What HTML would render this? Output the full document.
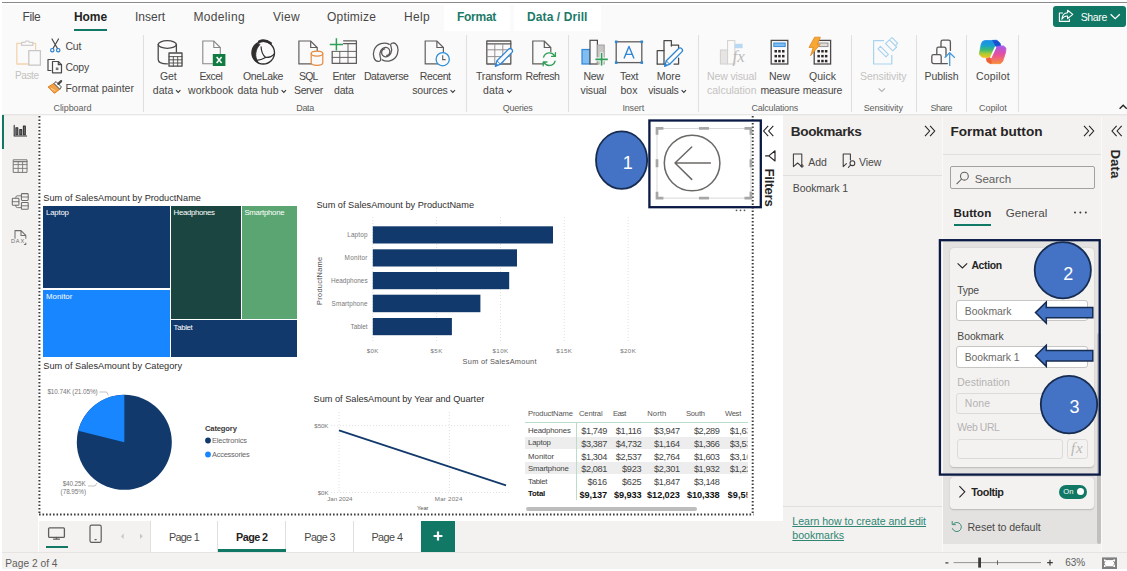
<!DOCTYPE html>
<html lang="en"><head><meta charset="utf-8"><title>Power BI Desktop - Bookmark button</title>
<style>
html,body{margin:0;padding:0;background:#fff;}
body{width:1127px;height:571px;position:relative;overflow:hidden;font-family:"Liberation Sans",sans-serif;}
.b{position:absolute;}
.t{position:absolute;white-space:pre;}
.u{text-decoration:underline;}
svg.ov{position:absolute;left:0;top:0;}
</style></head><body>
<div id="bg">
<div class="b" style="left:2.0px;top:2.0px;width:1125.0px;height:1.4px;background:#8a8a8a;"></div>
<div class="b" style="left:2.0px;top:5.0px;width:1125.0px;height:108.5px;background:#fafafa;"></div>
<div class="b" style="left:2.0px;top:113.6px;width:1125.0px;height:2.8px;background:linear-gradient(#dedede,#f2f2f2 55%,#fdfdfd);"></div>
<div class="b" style="left:444.0px;top:5.0px;width:65.5px;height:25.5px;background:#fff;"></div>
<div class="b" style="left:514.0px;top:5.0px;width:87.0px;height:25.5px;background:#fff;"></div>
<div class="b" style="left:74.0px;top:28.6px;width:33.0px;height:2.0px;background:#117865;"></div>
<div class="b" style="left:1053.2px;top:6.0px;width:73.0px;height:21.2px;background:#117865;border-radius:3px;"></div>
<div class="b" style="left:142.5px;top:35.0px;width:1.0px;height:77.0px;background:#e1dfdd;"></div>
<div class="b" style="left:466.3px;top:35.0px;width:1.0px;height:77.0px;background:#e1dfdd;"></div>
<div class="b" style="left:567.8px;top:35.0px;width:1.0px;height:77.0px;background:#e1dfdd;"></div>
<div class="b" style="left:697.7px;top:35.0px;width:1.0px;height:77.0px;background:#e1dfdd;"></div>
<div class="b" style="left:850.5px;top:35.0px;width:1.0px;height:77.0px;background:#e1dfdd;"></div>
<div class="b" style="left:915.5px;top:35.0px;width:1.0px;height:77.0px;background:#e1dfdd;"></div>
<div class="b" style="left:966.4px;top:35.0px;width:1.0px;height:77.0px;background:#e1dfdd;"></div>
<div class="b" style="left:1018.3px;top:35.0px;width:1.0px;height:77.0px;background:#e1dfdd;"></div>
<div class="b" style="left:2.0px;top:114.4px;width:36.3px;height:437.6px;background:#f3f2f1;background:linear-gradient(#e4e3e2,#f3f2f1 2.5px);"></div>
<div class="b" style="left:2.0px;top:114.8px;width:2.3px;height:34.5px;background:#117865;"></div>
<div class="b" style="left:38.5px;top:520.6px;width:744.5px;height:31.4px;background:#f3f2f1;"></div>
<div class="b" style="left:2.0px;top:552.0px;width:1125.0px;height:17.2px;background:#f3f2f1;"></div>
<div class="b" style="left:2.0px;top:552.0px;width:1125.0px;height:0.8px;background:#e6e4e2;"></div>
<div class="b" style="left:150.8px;top:520.6px;width:269.8px;height:31.2px;background:#fff;"></div>
<div class="b" style="left:150.4px;top:520.6px;width:1.0px;height:31.2px;background:#e1dfdd;"></div>
<div class="b" style="left:217.2px;top:520.6px;width:1.0px;height:31.2px;background:#e1dfdd;"></div>
<div class="b" style="left:285.3px;top:520.6px;width:1.0px;height:31.2px;background:#e1dfdd;"></div>
<div class="b" style="left:352.9px;top:520.6px;width:1.0px;height:31.2px;background:#e1dfdd;"></div>
<div class="b" style="left:217.9px;top:548.6px;width:67.8px;height:3.2px;background:#117865;"></div>
<div class="b" style="left:420.6px;top:520.6px;width:34.6px;height:31.2px;background:#117865;"></div>
<div class="b" style="left:46.4px;top:545.6px;width:21.3px;height:2.4px;background:#117865;"></div>
<div class="b" style="left:783.0px;top:114.4px;width:344.0px;height:437.6px;background:#f3f2f1;background:linear-gradient(#e4e3e2,#f3f2f1 2.5px);"></div>
<div class="b" style="left:942.0px;top:116.0px;width:1.0px;height:436.0px;background:#faf9f8;"></div>
<div class="b" style="left:1101.4px;top:116.0px;width:1.0px;height:436.0px;background:#faf9f8;"></div>
<div class="b" style="left:783.0px;top:174.5px;width:159.0px;height:1.0px;background:#e1dfdd;"></div>
<div class="b" style="left:783.0px;top:506.3px;width:159.0px;height:1.0px;background:#e1dfdd;"></div>
<div class="b" style="left:943.0px;top:154.2px;width:158.4px;height:1.0px;background:#e1dfdd;"></div>
<div class="b" style="left:950.0px;top:166.2px;width:144.6px;height:23.0px;border:1px solid #a3a19f;box-sizing:border-box;border-radius:2px;"></div>
<div class="b" style="left:953.5px;top:223.5px;width:37.9px;height:2.2px;background:#117865;"></div>
<div class="b" style="left:943.0px;top:241.0px;width:158.2px;height:303.3px;background:#e4e2e0;"></div>
<div class="b" style="left:1096.8px;top:333.0px;width:3.8px;height:211.3px;background:#c2c0be;border-radius:2px;"></div>
<div class="b" style="left:949.8px;top:247.9px;width:144.6px;height:219.1px;background:#f3f2f1;border-radius:4px;box-shadow:0 0.5px 1.5px rgba(0,0,0,.18);"></div>
<div class="b" style="left:949.8px;top:477.0px;width:144.6px;height:32.0px;background:#f3f2f1;border-radius:4px;box-shadow:0 0.5px 1.5px rgba(0,0,0,.18);"></div>
<div class="b" style="left:956.3px;top:300.4px;width:131.4px;height:21.1px;background:#fff;border:1px solid #c8c6c4;box-sizing:border-box;border-radius:3px;"></div>
<div class="b" style="left:956.3px;top:346.4px;width:131.4px;height:21.4px;background:#fff;border:1px solid #c8c6c4;box-sizing:border-box;border-radius:3px;"></div>
<div class="b" style="left:956.3px;top:393.0px;width:131.4px;height:20.5px;border:1px solid #dddbd9;box-sizing:border-box;border-radius:3px;"></div>
<div class="b" style="left:956.5px;top:438.6px;width:106.2px;height:20.5px;border:1px solid #dddbd9;box-sizing:border-box;border-radius:3px;"></div>
<div class="b" style="left:1066.5px;top:438.6px;width:21.1px;height:20.5px;border:1px solid #dddbd9;box-sizing:border-box;border-radius:3px;"></div>
<div class="b" style="left:1058.9px;top:484.8px;width:28.6px;height:13.8px;background:#117865;border-radius:7px;"></div>
<div class="b" style="left:1076.6px;top:488.2px;width:7.0px;height:7.0px;background:#fff;border-radius:4px;"></div>
<div class="b" style="left:43.3px;top:205.7px;width:126.7px;height:82.6px;background:#12396b;"></div>
<div class="b" style="left:43.3px;top:289.7px;width:126.7px;height:67.0px;background:#1886ff;"></div>
<div class="b" style="left:171.3px;top:205.7px;width:69.7px;height:113.3px;background:#1b4540;"></div>
<div class="b" style="left:242.3px;top:205.7px;width:54.7px;height:113.3px;background:#5aa571;"></div>
<div class="b" style="left:171.3px;top:320.3px;width:125.7px;height:36.4px;background:#12396b;"></div>
<div class="b" style="left:525.3px;top:436.6px;width:222.6px;height:12.4px;background:#ededed;"></div>
<div class="b" style="left:525.3px;top:462.2px;width:222.6px;height:12.3px;background:#ededed;"></div>
<div class="b" style="left:525.3px;top:422.2px;width:222.6px;height:0.9px;background:#b9dccb;"></div>
<div class="b" style="left:576.0px;top:422.6px;width:1.0px;height:77.4px;background:#b9dccb;"></div>
<div class="b" style="left:526.0px;top:507.1px;width:171.2px;height:3.7px;background:#bdbdbd;border-radius:2px;"></div>
</div>
<svg class="ov" width="1127" height="571" viewBox="0 0 1127 571" fill="none">
<g stroke="#3c3c3c" stroke-width="2" stroke-dasharray="1.6 1.9"><line x1="39.4" y1="116" x2="39.4" y2="515"/><line x1="752.7" y1="116" x2="752.7" y2="515"/><line x1="39" y1="514.6" x2="753.5" y2="514.6"/></g>
<g stroke="#d8d8d8" stroke-width="0.8" stroke-dasharray="1 2"><line x1="372.8" y1="217" x2="372.8" y2="342"/><line x1="436.6" y1="217" x2="436.6" y2="342"/><line x1="500.5" y1="217" x2="500.5" y2="342"/><line x1="564.3" y1="217" x2="564.3" y2="342"/><line x1="628.2" y1="217" x2="628.2" y2="342"/></g>
<rect x="372.8" y="226.3" width="180.2" height="17.2" fill="#12396b"/>
<rect x="372.8" y="249.3" width="144.2" height="17.2" fill="#12396b"/>
<rect x="372.8" y="272" width="136.4" height="17.2" fill="#12396b"/>
<rect x="372.8" y="294.7" width="107.6" height="17.5" fill="#12396b"/>
<rect x="372.8" y="318" width="79.1" height="17.2" fill="#12396b"/>
<g stroke="#d8d8d8" stroke-width="0.8" stroke-dasharray="1 2"><line x1="339" y1="412" x2="339" y2="493"/><line x1="449.4" y1="412" x2="449.4" y2="493"/><line x1="331" y1="425.6" x2="510" y2="425.6"/><line x1="331" y1="492.5" x2="510" y2="492.5"/></g>
<line x1="339" y1="430.4" x2="506" y2="485.4" stroke="#12396b" stroke-width="1.7"/>
<circle cx="124.3" cy="442.3" r="47.5" fill="#12396b"/>
<path d="M124.3 442.3 L124.3 394.8 A47.5 47.5 0 0 0 78.26 430.63 Z" fill="#1886ff"/>
<g stroke="#a6a6a6" stroke-width="0.7"><path d="M99.5 392 H106.6 L108.4 395.3"/><path d="M88 486 H95 L97 483"/></g>
<circle cx="208" cy="440.5" r="2.9" fill="#12396b"/><circle cx="208" cy="454.5" r="2.9" fill="#1886ff"/>
<rect x="649.4" y="120.5" width="111.4" height="86.7" stroke="#0a1a45" stroke-width="2.3"/>
<rect x="939.9" y="240.2" width="159.8" height="234.4" stroke="#0a1a45" stroke-width="2.3"/>
<ellipse cx="621.6" cy="160.1" rx="25.6" ry="28.8" fill="#4472c4" stroke="#172c51" stroke-width="1.8"/>
<ellipse cx="1062.8" cy="270.3" rx="28.1" ry="28.1" fill="#4472c4" stroke="#172c51" stroke-width="1.8"/>
<ellipse cx="1069" cy="404.6" rx="28.2" ry="28.8" fill="#4472c4" stroke="#172c51" stroke-width="1.8"/>
<path d="M1035.5 312.6 L1046.3 302.0 V307.40000000000003 H1092.8 V317.8 H1046.3 V323.20000000000005 Z" fill="#4472c4" stroke="#172c51" stroke-width="1.5" stroke-linejoin="miter"/>
<path d="M1035.5 355.8 L1046.3 345.2 V350.6 H1092.8 V361.0 H1046.3 V366.40000000000003 Z" fill="#4472c4" stroke="#172c51" stroke-width="1.5" stroke-linejoin="miter"/>
<rect x="657" y="128.4" width="93.9" height="69.7" stroke="#c8c8c8" stroke-width="0.7"/>
<g stroke="#a6a6a6" stroke-width="2.7"><path d="M657 134.8 V128.4 H663.4"/><path d="M744.5 128.4 H750.9 V134.8"/><path d="M657 191.7 V198.1 H663.4"/><path d="M744.5 198.1 H750.9 V191.7"/><path d="M698.95 128.4 H708.95"/><path d="M698.95 198.1 H708.95"/><path d="M657 159.25 V167.25"/><path d="M750.9 159.25 V167.25"/></g>
<g stroke="#6b6966" stroke-width="1.5" stroke-linecap="round" stroke-linejoin="round"><circle cx="692.1" cy="163" r="27.8"/><path d="M710.4 163 H675 M691.7 147 L675 163 L691.7 179.4"/></g>
<g fill="#555"><circle cx="736.5" cy="210.3" r="0.9"/><circle cx="740.5" cy="210.3" r="0.9"/><circle cx="744.5" cy="210.3" r="0.9"/></g>
<g stroke="#4a4947" stroke-width="1.3" stroke-linejoin="round" stroke-linecap="round" ><path d="M23.4 43.4 H16.8 V64 H28" stroke="#f5d3ad"/><path d="M32.6 43.4 H35.6 V49.6" stroke="#f5d3ad"/><path d="M21.6 45.4 V42.4 H24.8 A2.6 2.6 0 0 1 29.6 42.4 H32.8 V45.4 Z" stroke="#d0cecc" fill="#fafafa"/><rect x="28.8" y="50.6" width="11.6" height="14.6" stroke="#c8c6c4" fill="#fafafa"/></g>
<g stroke="#4a4947" stroke-width="1.2" stroke-linejoin="round" stroke-linecap="round" ><path d="M52 39 L57.5 48.5 M58.5 39 L53 48.5"/><circle cx="52.3" cy="50.2" r="1.7" stroke="#2f7fd0"/><circle cx="58.2" cy="50.2" r="1.7" stroke="#2f7fd0"/></g>
<g stroke="#4a4947" stroke-width="1.2" stroke-linejoin="round" stroke-linecap="round" ><path d="M51 70.5 H48 V59.5 H54.5 "/><path d="M52.5 61.5 H58.3 L61.5 64.7 V72.8 H52.5 Z" fill="none" stroke="#4a4947" stroke-width="1.2"/><path d="M58.3 61.5 V64.7 H61.5" stroke="#4a4947" stroke-width="1.2"/><rect x="55.8" y="67.5" width="2.6" height="2.6" fill="#777" stroke="none"/></g>
<polygon points="48.08,86.91 53.97,83.44 59.75,89.22 54.44,93.37" fill="#f2a048" stroke="#e0801e" stroke-width="1" stroke-linejoin="round"/><polygon points="53.97,83.44 56.05,81.59 61.37,86.91 59.75,89.22" fill="#fafafa" stroke="#4a4947" stroke-width="1" stroke-linejoin="round"/><polyline points="58.36,83.90 61.14,81.13" stroke="#4a4947" stroke-width="2.2" stroke-linecap="round"/><polyline points="50.97,88.29 55.36,90.83" stroke="#fbd9a8" stroke-width="1"/>
<g stroke="#4a4947" stroke-width="1.3" stroke-linejoin="round" stroke-linecap="round" ><path d="M158.2 44.5 V59.5 C158.2 62.5 163 63.8 167.4 63.8"/><path d="M176.4 44.5 V52"/><ellipse cx="167.3" cy="44.5" rx="9.1" ry="3.8"/><rect x="169" y="53" width="13" height="13.2" fill="#fafafa"/><path d="M169 56.6 H182 M169 59.8 H182 M169 63 H182 M173.3 56.6 V66.2 M177.7 56.6 V66.2" stroke-width="0.9"/></g>
<path d="M202.8 41 H213.8 L220.3 47.5 V63.8 H202.8 Z" fill="none" stroke="#8a8886" stroke-width="1.1"/><path d="M213.8 41 V47.5 H220.3" stroke="#8a8886" stroke-width="1.1"/>
<rect x="212.8" y="54" width="12.6" height="12" fill="#107c41"/><path d="M216.6 57 L221.6 63 M221.6 57 L216.6 63" stroke="#fff" stroke-width="1.5"/>
<g stroke="#2f2e2d" stroke-linecap="round" stroke-linejoin="round"><circle cx="263.2" cy="52.7" r="11.3" stroke-width="1.3"/><path d="M259.20 41.72 Q264.53 38.79 270.65 43.32" stroke-width="2.6"/><path d="M257.60 43.58 C250.15 48.64 250.82 59.29 258.14 62.48 C254.14 56.63 255.21 49.31 259.73 44.65 Z" fill="#2f2e2d" stroke-width="1"/><path d="M261.07 46.78 C261.33 51.97 262.93 55.30 265.59 57.43 C268.79 57.69 272.11 56.36 274.38 53.97" stroke-width="1.2"/><path d="M256.54 60.35 C259.47 60.09 262.80 59.02 265.59 57.43" stroke-width="1.2"/></g>
<path d="M298.9 41 H310.7 L317.2 47.5 V63.8 H298.9 Z" fill="none" stroke="#605e5c" stroke-width="1.2"/><path d="M310.7 41 V47.5 H317.2" stroke="#605e5c" stroke-width="1.2"/>
<path d="M311.2 53.6 V62.8 C311.2 66.2 322.8 66.2 322.8 62.8 V53.6" fill="#fafafa" stroke="#e68a3e" stroke-width="1.2"/><ellipse cx="317" cy="53.6" rx="5.8" ry="2.5" fill="#fafafa" stroke="#e68a3e" stroke-width="1.2"/>
<g stroke="#605e5c" stroke-width="1.25" stroke-linejoin="round" stroke-linecap="round" ><path d="M343.6 40.8 H356.4 V63.4 H332.2 V51.6"/><path d="M343.6 43.6 H356.4" stroke-width="1.4"/><path d="M332.2 51.4 H356.4 M332.2 57.4 H356.4 M339.8 51.6 V63.4 M348 43.6 V63.4" stroke-width="0.95"/></g>
<path d="M336.4 38.2 V50.6 M329.8 44.4 H343" stroke="#2f9e56" stroke-width="1.5"/>
<g stroke="#5a5856" stroke-width="1.25" stroke-linecap="round" stroke-linejoin="round"><path d="M389.25 44.40 C384.49 41.60 376.64 43.28 374.12 50.01 C372.16 55.61 374.40 61.21 378.04 61.49 C380.57 61.49 381.41 59.53 380.29 57.29 C378.61 53.37 381.13 48.04 385.33 47.48 C388.41 47.20 390.09 49.73 389.81 52.25 C389.53 54.49 388.13 55.33 386.73 55.33"/><path d="M382.19 59.87 C386.95 62.67 394.80 60.99 397.32 54.26 C399.28 48.66 397.04 43.06 393.39 42.78 C390.87 42.78 390.03 44.74 391.15 46.98 C392.83 50.90 390.31 56.22 386.11 56.78 C383.03 57.06 381.35 54.54 381.63 52.02 C381.91 49.78 383.31 48.94 384.71 48.94"/></g>
<path d="M425.2 41 H436.9 L443.4 47.5 V63.8 H425.2 Z" fill="none" stroke="#605e5c" stroke-width="1.2"/><path d="M436.9 41 V47.5 H443.4" stroke="#605e5c" stroke-width="1.2"/>
<circle cx="442.7" cy="59.2" r="6.6" fill="#fafafa" stroke="#2f8fd8" stroke-width="1.3"/><path d="M442.7 55.2 V59.6 H445.6" stroke="#605e5c" stroke-width="1.1"/>
<g stroke="#5a5856" stroke-width="1.3" stroke-linejoin="round" stroke-linecap="round" ><rect x="486.8" y="41" width="24" height="23"/><path d="M486.8 43.8 H510.8" stroke-width="1.3"/><path d="M486.8 49.8 H510.8 M486.8 56.6 H510.8 M494.8 44 V64 M502.8 44 V64" stroke-width="0.9" stroke="#8a8886"/></g>
<path d="M495.3 66.3 L497 60.8 L508.4 49.4 A2.2 2.2 0 0 1 511.8 52.6 L500.4 64.2 Z" fill="#fafafa" stroke="#2f86d6" stroke-width="1.3" stroke-linejoin="round"/><path d="M497 60.8 L500.4 64.2" stroke="#2f86d6" stroke-width="1"/><path d="M495.3 66.3 L496.3 63.2 L498.2 65.3 Z" fill="#2f86d6"/>
<path d="M532.8 41 H544.3 L550.8 47.5 V63.8 H532.8 Z" fill="none" stroke="#605e5c" stroke-width="1.2"/><path d="M544.3 41 V47.5 H550.8" stroke="#605e5c" stroke-width="1.2"/>
<circle cx="549.3" cy="59.2" r="7.4" fill="#fafafa"/><g stroke="#2f9e56" stroke-width="1.3" stroke-linecap="round" stroke-linejoin="round"><path d="M543.6 57.2 A6 6 0 0 1 554.6 56 M555.4 52.6 V56.4 H551.6"/><path d="M555 61.2 A6 6 0 0 1 544 62.4 M543.2 65.8 V62 H547"/></g>
<rect x="582" y="49.5" width="8" height="14.5" fill="#7fbdf2" stroke="#2f86d6" stroke-width="1.2"/><rect x="590" y="40.3" width="7.4" height="23.7" fill="#fafafa" stroke="#4a4947" stroke-width="1.2"/><rect x="597.4" y="45" width="6.8" height="19" fill="#c8c6c4" stroke="#a19f9d" stroke-width="1"/><path d="M601.6 52.5 V66 M595 59.4 H608" stroke="#fafafa" stroke-width="3.6"/><path d="M601.6 53 V65.6 M595.4 59.4 H607.8" stroke="#2f9e56" stroke-width="1.6"/>
<rect x="616.2" y="41.8" width="25.6" height="20.8" stroke="#605e5c" stroke-width="1.3"/><g fill="#2f86d6"><rect x="614.9" y="40.5" width="2.6" height="2.6"/><rect x="640.5" y="40.5" width="2.6" height="2.6"/><rect x="614.9" y="61.3" width="2.6" height="2.6"/><rect x="640.5" y="61.3" width="2.6" height="2.6"/></g><path d="M624 58.5 L629 46.5 L634 58.5 M625.8 54.4 H632.2" stroke="#2f86d6" stroke-width="1.4" stroke-linejoin="round"/>
<g stroke="#4a4947" stroke-width="1.25" stroke-linejoin="round" stroke-linecap="round" ><path d="M657.2 64 V50.5 H664"/><path d="M664 64 V40.6 H671.4 V46"/><path d="M671.4 45.2 H678.6 V50"/><path d="M657.2 64 H668 M678.6 58 V64 H674"/></g>
<path d="M664.6 66.3 L666.3 60.8 L678.4 48.7 A2.2 2.2 0 0 1 681.8 51.9 L669.7 64.2 Z" fill="#fafafa" stroke="#2f86d6" stroke-width="1.3" stroke-linejoin="round"/><path d="M666.3 60.8 L669.7 64.2" stroke="#2f86d6" stroke-width="1"/><path d="M664.6 66.3 L665.6 63.2 L667.5 65.3 Z" fill="#2f86d6"/>
<rect x="720.4" y="50" width="7.2" height="14" fill="#e6e5e4" stroke="#d2d0ce" stroke-width="1"/><rect x="727.6" y="40.6" width="7.2" height="23.4" fill="#fafafa" stroke="#d2d0ce" stroke-width="1"/><rect x="734.8" y="43.8" width="7.8" height="4.4" fill="#b9d9f3" stroke="none"/>
<rect x="771.2" y="40.4" width="16.59999999999991" height="23.6" fill="#fafafa" stroke="#4a4947" stroke-width="1.3"/><rect x="773.8000000000001" y="43.0" width="11.39999999999991" height="3.6" fill="#7fbdf2" stroke="#2f86d6" stroke-width="0.9"/><rect x="774.5" y="50.0" width="2.5" height="2.5" fill="#2b2a29"/><rect x="778.2" y="50.0" width="2.5" height="2.5" fill="#2b2a29"/><rect x="782.0" y="50.0" width="2.5" height="2.5" fill="#2b2a29"/><rect x="774.5" y="54.9" width="2.5" height="2.5" fill="#2b2a29"/><rect x="778.2" y="54.9" width="2.5" height="2.5" fill="#2b2a29"/><rect x="782.0" y="54.9" width="2.5" height="2.5" fill="#2b2a29"/><rect x="774.5" y="59.8" width="2.5" height="2.5" fill="#2b2a29"/><rect x="778.2" y="59.8" width="2.5" height="2.5" fill="#2b2a29"/><rect x="782.0" y="59.8" width="2.5" height="2.5" fill="#2b2a29"/>
<rect x="814.2" y="40.4" width="16.399999999999977" height="23.6" fill="#fafafa" stroke="#4a4947" stroke-width="1.3"/><rect x="816.8000000000001" y="43.0" width="11.199999999999978" height="3.6" fill="#e1dfdd" stroke="#8a8886" stroke-width="0.9"/><rect x="817.4" y="50.0" width="2.5" height="2.5" fill="#2b2a29"/><rect x="821.2" y="50.0" width="2.5" height="2.5" fill="#2b2a29"/><rect x="824.9" y="50.0" width="2.5" height="2.5" fill="#2b2a29"/><rect x="817.4" y="54.9" width="2.5" height="2.5" fill="#2b2a29"/><rect x="821.2" y="54.9" width="2.5" height="2.5" fill="#2b2a29"/><rect x="824.9" y="54.9" width="2.5" height="2.5" fill="#2b2a29"/><rect x="817.4" y="59.8" width="2.5" height="2.5" fill="#2b2a29"/><rect x="821.2" y="59.8" width="2.5" height="2.5" fill="#2b2a29"/><rect x="824.9" y="59.8" width="2.5" height="2.5" fill="#2b2a29"/>
<path d="M814.6 37.2 L820.4 37.2 L817.3 44.4 L820.2 44.4 L810.6 55.6 L813.2 47.4 L809 47.4 Z" fill="#f7a833" stroke="#e0861a" stroke-width="0.8" stroke-linejoin="round"/>
<g stroke="#a9d3ef" stroke-width="1.2" stroke-linejoin="round"><path d="M884 40.6 H873.6 V64 H891.8 V55"/><path d="M878 48.8 L880.4 46.4 L888.4 54.4 L886 56.8 Z"/><path d="M885.6 43.6 L889.4 39.8 L896.6 47 L892.8 50.8 Z"/><path d="M889.8 39.4 L892 37.6 L897.6 43.2 L895.8 45.4"/></g>
<path d="M878.6 88.4 L881.8 91.4 L885 88.4" stroke="#b3b0ad" stroke-width="1.1"/>
<g stroke="#5a5856" stroke-width="1.3" stroke-linejoin="round" stroke-linecap="round" ><path d="M941 47 V42 A1.8 1.8 0 0 1 942.8 40.2 H948.6 A1.8 1.8 0 0 1 950.4 42 V50.4"/><path d="M936.8 54.4 V49 A1.8 1.8 0 0 1 938.6 47.2 H944.2 A1.8 1.8 0 0 1 946 49 V56.6"/><path d="M933.6 54.6 H939.4 A1.8 1.8 0 0 1 941.2 56.4 V63.6 H933.6 A1.8 1.8 0 0 1 931.8 61.8 V56.4 A1.8 1.8 0 0 1 933.6 54.6 Z"/><path d="M941.2 63.6 H947.4"/></g>
<path d="M949.7 66 V53 M944.6 57.8 L949.7 52.8 L954.8 57.8" stroke="#4a9bd9" stroke-width="1.3" stroke-linejoin="round"/>
<defs><linearGradient id="cpB" x1="0" y1="0" x2="0" y2="1"><stop offset="0" stop-color="#1b8fe8"/><stop offset="0.3" stop-color="#1aa0d0"/><stop offset="0.55" stop-color="#3cba70"/><stop offset="0.8" stop-color="#b8cc30"/><stop offset="1" stop-color="#f0c020"/></linearGradient><linearGradient id="cpC" x1="0" y1="0" x2="0" y2="1"><stop offset="0" stop-color="#a457f0"/><stop offset="0.5" stop-color="#e8509a"/><stop offset="1" stop-color="#f68c3a"/></linearGradient></defs>
<polygon points="984.77,40.57 996.75,40.39 999.68,42.87 1000.57,45.89 995.60,46.95 990.72,57.60 982.29,57.25 979.27,54.59 981.22,43.94 982.56,41.45" fill="url(#cpB)" stroke="url(#cpB)" stroke-width="0.8" stroke-linejoin="round"/>
<polygon points="992.58,40.39 997.02,40.39 999.86,43.23 1000.75,46.07 996.13,46.60" fill="#1a4fd0" stroke="#1a4fd0" stroke-width="0.6" stroke-linejoin="round"/>
<polygon points="996.49,46.42 1003.41,45.89 1005.89,48.02 1005.71,51.75 1002.70,61.51 1000.30,63.64 990.28,63.64 987.17,61.86 986.19,58.49 990.72,57.78" fill="url(#cpC)" stroke="url(#cpC)" stroke-width="0.8" stroke-linejoin="round"/>
<polygon points="986.19,58.49 990.72,57.78 992.05,63.28 990.28,63.64 987.17,61.86" fill="#ee5a30" opacity="0.85"/>
<polyline points="995.42,47.31 990.98,57.25" stroke="#fff" stroke-width="1.7" stroke-linecap="round"/>
<path d="M1119.6 108.8 L1123.2 105.2 L1126.8 108.8" stroke="#252423" stroke-width="1.4"/>
<g stroke="#fff" stroke-width="1.1" stroke-linejoin="round" stroke-linecap="round"><path d="M1062.6 13 H1059.4 V21.4 H1069.4 V19.4"/><path d="M1067.6 10.2 L1072.8 14.4 L1067.6 18.6 V16 C1064.8 15.8 1063 17 1061.8 19.2 C1062.2 15.4 1064.2 13 1067.6 12.8 Z"/></g>
<path d="M1110.6 14.2 L1115.2 18.6 L1119.8 14.2" stroke="#fff" stroke-width="1.3"/>
<path d="M176.0 90.2 L178.2 92.39999999999999 L180.39999999999998 90.2" stroke="#3b3a39" stroke-width="1.1"/>
<path d="M281.6 90.2 L283.8 92.39999999999999 L286.0 90.2" stroke="#3b3a39" stroke-width="1.1"/>
<path d="M450.6 90.2 L452.8 92.39999999999999 L455.0 90.2" stroke="#3b3a39" stroke-width="1.1"/>
<path d="M507.2 90.2 L509.4 92.39999999999999 L511.59999999999997 90.2" stroke="#3b3a39" stroke-width="1.1"/>
<path d="M681.5999999999999 90.2 L683.8 92.39999999999999 L686.0 90.2" stroke="#3b3a39" stroke-width="1.1"/>
<g stroke="#333" stroke-width="1.1" stroke-linejoin="round" stroke-linecap="round" ><path d="M14.2 125.4 V136 H26.6"/><rect x="15.9" y="127.8" width="1.9" height="7" fill="#777"/><rect x="19.8" y="129.6" width="1.9" height="5.2" fill="#777"/><rect x="23.4" y="126" width="1.9" height="8.8" fill="#777"/></g>
<g stroke="#7a7876" stroke-width="1" stroke-linejoin="round" stroke-linecap="round" ><rect x="13.6" y="159.8" width="13.4" height="12.6"/><path d="M13.6 161.6 H27" stroke-width="1.2"/><path d="M13.6 164.6 H27 M13.6 168.4 H27 M18.2 161.6 V172.4 M22.6 161.6 V172.4" stroke-width="0.9"/></g>
<g stroke="#706e6c" stroke-width="1.05" stroke-linejoin="round" stroke-linecap="round" ><rect x="21.4" y="193.6" width="6.8" height="6.8" rx="0.8"/><rect x="21.4" y="202.4" width="6.8" height="6.8" rx="0.8"/><rect x="12.3" y="198.2" width="6.6" height="7" rx="0.8"/><path d="M21.4 197 H28.2 M21.4 205.8 H28.2 M12.3 201.7 H18.9" stroke-width="0.9"/><path d="M15.8 198.2 V197.4 A1.6 1.6 0 0 1 17.4 195.8 H21.4 M15.8 205.2 V206 A1.6 1.6 0 0 0 17.4 207.6 H21.4" stroke-width="0.9"/></g>
<g stroke="#706e6c" stroke-width="1.05" stroke-linejoin="round" stroke-linecap="round" ><path d="M15 238.2 V230.6 H21 L25.8 235.4 V238.2 M21 230.6 V235.4 H25.8 M25.8 243 V244.4 H24.4"/></g>
<g stroke="#605e5c" stroke-width="1.3" stroke-linejoin="round" stroke-linecap="round" ><rect x="48.6" y="527.8" width="15.8" height="9.6" rx="1"/><path d="M53.6 539.2 H59.4 M56.5 537.4 V539.2"/></g>
<g stroke="#605e5c" stroke-width="1.2" stroke-linejoin="round" stroke-linecap="round" ><rect x="90" y="525.2" width="11.2" height="17.2" rx="1.6"/><path d="M95 539.6 H96.2"/></g>
<path d="M123.6 533.6 L121 536.3 L123.6 539 Z" fill="#c8c6c4"/><path d="M140 533.6 L142.8 536.3 L140 539 Z" fill="#c8c6c4"/>
<path d="M438 531.6 V540.4 M433.6 536 H442.4" stroke="#fff" stroke-width="2.2"/>
<g stroke="#252423" stroke-width="1.1"><path d="M768.2 125.9 L763.6 131 L768.2 136.1"/><path d="M773.3 125.9 L768.7 131 L773.3 136.1"/></g>
<g stroke="#252423" stroke-width="1.1"><path d="M925.0 125.9 L929.6 131 L925.0 136.1"/><path d="M930.1 125.9 L934.7 131 L930.1 136.1"/></g>
<g stroke="#252423" stroke-width="1.1"><path d="M1084.0 125.9 L1088.6 131 L1084.0 136.1"/><path d="M1089.1 125.9 L1093.7 131 L1089.1 136.1"/></g>
<g stroke="#252423" stroke-width="1.1"><path d="M1116.6 125.9 L1112.0 131 L1116.6 136.1"/><path d="M1121.7 125.9 L1117.1 131 L1121.7 136.1"/></g>
<path d="M775 150.8 V161 L768.8 155.9 Z M768.8 155.9 H765.6" stroke="#252423" stroke-width="1.15" stroke-linejoin="round" stroke-linecap="round"/>
<g stroke="#3b3a39" stroke-width="1.05" stroke-linejoin="round" stroke-linecap="round" ><path d="M793.4 154 H801.8 V166.6 L797.6 163 L793.4 166.6 Z"/><path d="M800.4 166 H803.6 M802 164.4 V167.6" stroke-width="0.9"/></g>
<g stroke="#3b3a39" stroke-width="1.05" stroke-linejoin="round" stroke-linecap="round" ><path d="M850.4 160 V154 H843.2 V166.6 L846.4 163.6"/><circle cx="852.4" cy="163.2" r="2.4"/><path d="M850.6 165 L848.4 167.4"/></g>
<g stroke="#605e5c" stroke-width="1.05" stroke-linejoin="round" stroke-linecap="round" ><circle cx="964.4" cy="176.2" r="3.9"/><path d="M961.6 179 L956.8 183.8"/></g>
<g fill="#3b3a39"><circle cx="1075" cy="212.6" r="1"/><circle cx="1080.4" cy="212.6" r="1"/><circle cx="1085.8" cy="212.6" r="1"/></g>
<path d="M957.6 263.4 L962.4 268 L967.2 263.4" stroke="#252423" stroke-width="1.1"/>
<path d="M959.4 486.2 L964.8 491.8 L959.4 497.4" stroke="#252423" stroke-width="1.1"/>
<g stroke="#3f8f7c" stroke-width="1" stroke-linejoin="round" stroke-linecap="round" ><path d="M953.6 523.6 A4.6 4.6 0 1 1 952.4 528.6"/><path d="M952.2 521.4 V524.6 H955.4"/></g>
<path d="M953.5 562.6 H1041" stroke="#8a8886" stroke-width="0.9"/><rect x="978.2" y="557.6" width="2.8" height="10" fill="#3b3a39"/><rect x="997" y="560.4" width="1" height="4.4" fill="#605e5c"/><path d="M945.4 562.9 H948.4" stroke="#3b3a39" stroke-width="1.2"/><path d="M1047.2 562.6 H1052.8 M1050 559.8 V565.4" stroke="#3b3a39" stroke-width="1.2"/>
<rect x="1103" y="558.4" width="13" height="9.6" fill="#fff" stroke="#808080" stroke-width="2"/><path d="M1105.2 561 L1103.8 563.2 L1105.2 565.4 M1113.6 561 L1115 563.2 L1113.6 565.4 M1105.4 559.6 H1113.4 M1105.4 566.8 H1113.4" stroke="#7a7a7a" stroke-width="1"/>
</svg>
<div id="tx">
<span class="t " style="left:22.6px;top:8.8px;font-size:12px;line-height:16px;color:#484746;letter-spacing:-0.44px;">File</span>
<span class="t " style="left:74.0px;top:8.8px;font-size:12px;line-height:16px;color:#252423;letter-spacing:-0.09px;font-weight:700;">Home</span>
<span class="t " style="left:135.0px;top:8.8px;font-size:12px;line-height:16px;color:#484746;letter-spacing:-0.00px;">Insert</span>
<span class="t " style="left:193.4px;top:8.8px;font-size:12px;line-height:16px;color:#484746;letter-spacing:0.36px;">Modeling</span>
<span class="t " style="left:273.0px;top:8.8px;font-size:12px;line-height:16px;color:#484746;letter-spacing:0.30px;">View</span>
<span class="t " style="left:327.0px;top:8.8px;font-size:12px;line-height:16px;color:#484746;letter-spacing:0.21px;">Optimize</span>
<span class="t " style="left:404.0px;top:8.8px;font-size:12px;line-height:16px;color:#484746;letter-spacing:0.33px;">Help</span>
<span class="t " style="left:457.0px;top:8.8px;font-size:12px;line-height:16px;color:#1c7a68;letter-spacing:-0.28px;font-weight:700;">Format</span>
<span class="t " style="left:527.0px;top:8.8px;font-size:12px;line-height:16px;color:#1c7a68;letter-spacing:0.10px;font-weight:700;">Data / Drill</span>
<span class="t " style="left:1080.7px;top:9.6px;font-size:10.5px;line-height:14px;color:#fff;letter-spacing:-0.35px;">Share</span>
<span class="t " style="left:15.0px;top:69.3px;font-size:10px;line-height:13px;color:#c4c2c0;letter-spacing:-0.40px;">Paste</span>
<span class="t " style="left:65.4px;top:38.8px;font-size:10.5px;line-height:14px;color:#484746;letter-spacing:-0.11px;">Cut</span>
<span class="t " style="left:65.4px;top:60.0px;font-size:10.5px;line-height:14px;color:#484746;letter-spacing:-0.23px;">Copy</span>
<span class="t " style="left:65.4px;top:80.8px;font-size:10.5px;line-height:14px;color:#484746;letter-spacing:0.02px;">Format painter</span>
<span class="t " style="left:53.5px;top:102.2px;font-size:9px;line-height:12px;color:#605e5c;letter-spacing:-0.08px;">Clipboard</span>
<span class="t " style="left:160.0px;top:69.4px;font-size:10.5px;line-height:14px;color:#484746;letter-spacing:-0.18px;">Get</span>
<span class="t " style="left:152.8px;top:83.4px;font-size:10.5px;line-height:14px;color:#484746;letter-spacing:0.04px;">data</span>
<span class="t " style="left:199.4px;top:69.4px;font-size:10.5px;line-height:14px;color:#484746;letter-spacing:-0.56px;">Excel</span>
<span class="t " style="left:188.0px;top:83.4px;font-size:10.5px;line-height:14px;color:#484746;letter-spacing:0.06px;">workbook</span>
<span class="t " style="left:243.0px;top:69.4px;font-size:10.5px;line-height:14px;color:#484746;letter-spacing:-0.38px;">OneLake</span>
<span class="t " style="left:237.4px;top:83.4px;font-size:10.5px;line-height:14px;color:#484746;letter-spacing:0.04px;">data hub</span>
<span class="t " style="left:299.0px;top:69.4px;font-size:10.5px;line-height:14px;color:#484746;letter-spacing:-0.84px;">SQL</span>
<span class="t " style="left:294.0px;top:83.4px;font-size:10.5px;line-height:14px;color:#484746;letter-spacing:-0.36px;">Server</span>
<span class="t " style="left:332.4px;top:69.4px;font-size:10.5px;line-height:14px;color:#484746;letter-spacing:-0.42px;">Enter</span>
<span class="t " style="left:334.0px;top:83.4px;font-size:10.5px;line-height:14px;color:#484746;letter-spacing:-0.16px;">data</span>
<span class="t " style="left:363.9px;top:69.4px;font-size:10.5px;line-height:14px;color:#484746;letter-spacing:-0.35px;">Dataverse</span>
<span class="t " style="left:419.8px;top:69.4px;font-size:10.5px;line-height:14px;color:#484746;letter-spacing:-0.41px;">Recent</span>
<span class="t " style="left:412.3px;top:83.4px;font-size:10.5px;line-height:14px;color:#484746;letter-spacing:-0.21px;">sources</span>
<span class="t " style="left:296.2px;top:102.2px;font-size:9px;line-height:12px;color:#605e5c;letter-spacing:-0.30px;">Data</span>
<span class="t " style="left:476.0px;top:69.4px;font-size:10.5px;line-height:14px;color:#484746;letter-spacing:-0.18px;">Transform</span>
<span class="t " style="left:483.0px;top:83.4px;font-size:10.5px;line-height:14px;color:#484746;letter-spacing:0.14px;">data</span>
<span class="t " style="left:525.5px;top:69.4px;font-size:10.5px;line-height:14px;color:#484746;letter-spacing:-0.40px;">Refresh</span>
<span class="t " style="left:502.8px;top:102.2px;font-size:9px;line-height:12px;color:#605e5c;letter-spacing:-0.25px;">Queries</span>
<span class="t " style="left:583.4px;top:69.4px;font-size:10.5px;line-height:14px;color:#484746;letter-spacing:-0.24px;">New</span>
<span class="t " style="left:580.6px;top:83.4px;font-size:10.5px;line-height:14px;color:#484746;letter-spacing:-0.18px;">visual</span>
<span class="t " style="left:620.0px;top:69.4px;font-size:10.5px;line-height:14px;color:#484746;letter-spacing:-0.32px;">Text</span>
<span class="t " style="left:620.4px;top:83.4px;font-size:10.5px;line-height:14px;color:#484746;letter-spacing:0.05px;">box</span>
<span class="t " style="left:656.7px;top:69.4px;font-size:10.5px;line-height:14px;color:#484746;letter-spacing:0.02px;">More</span>
<span class="t " style="left:648.2px;top:83.4px;font-size:10.5px;line-height:14px;color:#484746;letter-spacing:-0.24px;">visuals</span>
<span class="t " style="left:622.4px;top:102.2px;font-size:9px;line-height:12px;color:#605e5c;letter-spacing:-0.15px;">Insert</span>
<span class="t " style="left:707.0px;top:69.4px;font-size:10.5px;line-height:14px;color:#c4c2c0;letter-spacing:-0.13px;">New visual</span>
<span class="t " style="left:707.0px;top:83.4px;font-size:10.5px;line-height:14px;color:#c4c2c0;letter-spacing:-0.01px;">calculation</span>
<span class="t " style="left:732.4px;top:46.0px;font-size:17px;line-height:22px;color:#bdbbb9;letter-spacing:0.16px;font-style:italic;font-family:'Liberation Serif',serif;">fx</span>
<span class="t " style="left:769.0px;top:69.4px;font-size:10.5px;line-height:14px;color:#484746;letter-spacing:-0.01px;">New</span>
<span class="t " style="left:760.4px;top:83.4px;font-size:10.5px;line-height:14px;color:#484746;letter-spacing:-0.25px;">measure</span>
<span class="t " style="left:809.0px;top:69.4px;font-size:10.5px;line-height:14px;color:#484746;letter-spacing:0.03px;">Quick</span>
<span class="t " style="left:802.7px;top:83.4px;font-size:10.5px;line-height:14px;color:#484746;letter-spacing:-0.18px;">measure</span>
<span class="t " style="left:751.4px;top:102.2px;font-size:9px;line-height:12px;color:#605e5c;letter-spacing:-0.20px;">Calculations</span>
<span class="t " style="left:860.0px;top:69.4px;font-size:10.5px;line-height:14px;color:#c4c2c0;letter-spacing:-0.07px;">Sensitivity</span>
<span class="t " style="left:863.7px;top:102.2px;font-size:9px;line-height:12px;color:#605e5c;letter-spacing:-0.12px;">Sensitivity</span>
<span class="t " style="left:924.6px;top:69.2px;font-size:10.5px;line-height:14px;color:#484746;letter-spacing:-0.09px;">Publish</span>
<span class="t " style="left:930.6px;top:102.2px;font-size:9px;line-height:12px;color:#605e5c;letter-spacing:-0.53px;">Share</span>
<span class="t " style="left:976.0px;top:69.2px;font-size:10.5px;line-height:14px;color:#484746;letter-spacing:0.16px;">Copilot</span>
<span class="t " style="left:979.0px;top:102.2px;font-size:9px;line-height:12px;color:#605e5c;letter-spacing:-0.05px;">Copilot</span>
<span class="t " style="left:11.0px;top:238.1px;font-size:5.6px;line-height:7px;color:#706e6c;letter-spacing:0.83px;">DAX</span>
<span class="t " style="left:43.3px;top:191.6px;font-size:9.2px;line-height:12px;color:#2f2e2d;letter-spacing:0.01px;">Sum of SalesAmount by ProductName</span>
<span class="t " style="left:43.3px;top:359.7px;font-size:9.2px;line-height:12px;color:#2f2e2d;letter-spacing:0.01px;">Sum of SalesAmount by Category</span>
<span class="t " style="left:316.4px;top:198.6px;font-size:9.2px;line-height:12px;color:#2f2e2d;letter-spacing:0.01px;">Sum of SalesAmount by ProductName</span>
<span class="t " style="left:313.6px;top:392.7px;font-size:9.2px;line-height:12px;color:#2f2e2d;letter-spacing:-0.01px;">Sum of SalesAmount by Year and Quarter</span>
<span class="t " style="left:46.0px;top:208.4px;font-size:7.8px;line-height:10px;color:#fff;letter-spacing:-0.19px;">Laptop</span>
<span class="t " style="left:46.0px;top:292.0px;font-size:7.8px;line-height:10px;color:#fff;letter-spacing:0.06px;">Monitor</span>
<span class="t " style="left:173.6px;top:208.4px;font-size:7.8px;line-height:10px;color:#fff;letter-spacing:-0.32px;">Headphones</span>
<span class="t " style="left:244.4px;top:208.4px;font-size:7.8px;line-height:10px;color:#fff;letter-spacing:-0.25px;">Smartphone</span>
<span class="t " style="left:173.6px;top:322.6px;font-size:7.8px;line-height:10px;color:#fff;letter-spacing:-0.34px;">Tablet</span>
<span class="t " style="left:47.4px;top:388.0px;font-size:6.4px;line-height:8px;color:#777;letter-spacing:-0.08px;">$10.74K (21.05%)</span>
<span class="t " style="left:62.7px;top:479.5px;font-size:6.4px;line-height:8px;color:#777;letter-spacing:-0.14px;">$40.25K</span>
<span class="t " style="left:60.6px;top:488.3px;font-size:6.4px;line-height:8px;color:#777;letter-spacing:-0.07px;">(78.95%)</span>
<span class="t " style="left:205.0px;top:423.8px;font-size:7.6px;line-height:10px;color:#3b3a39;letter-spacing:-0.15px;font-weight:700;">Category</span>
<span class="t " style="left:212.0px;top:435.5px;font-size:7.4px;line-height:10px;color:#666;letter-spacing:-0.12px;">Electronics</span>
<span class="t " style="left:212.0px;top:449.5px;font-size:7.4px;line-height:10px;color:#666;letter-spacing:-0.22px;">Accessories</span>
<span class="t " style="left:347.2px;top:230.9px;font-size:6.4px;line-height:8px;color:#777;letter-spacing:0.14px;">Laptop</span>
<span class="t " style="left:344.6px;top:253.9px;font-size:6.4px;line-height:8px;color:#777;letter-spacing:0.24px;">Monitor</span>
<span class="t " style="left:331.0px;top:276.6px;font-size:6.4px;line-height:8px;color:#777;letter-spacing:0.04px;">Headphones</span>
<span class="t " style="left:331.6px;top:299.5px;font-size:6.4px;line-height:8px;color:#777;letter-spacing:0.12px;">Smartphone</span>
<span class="t " style="left:350.6px;top:322.6px;font-size:6.4px;line-height:8px;color:#777;letter-spacing:-0.01px;">Tablet</span>
<span class="t " style="left:366.8px;top:347.0px;font-size:6.2px;line-height:8px;color:#777;letter-spacing:0.33px;">$0K</span>
<span class="t " style="left:430.6px;top:347.0px;font-size:6.2px;line-height:8px;color:#777;letter-spacing:0.33px;">$5K</span>
<span class="t " style="left:492.5px;top:347.0px;font-size:6.2px;line-height:8px;color:#777;letter-spacing:0.39px;">$10K</span>
<span class="t " style="left:556.3px;top:347.0px;font-size:6.2px;line-height:8px;color:#777;letter-spacing:0.39px;">$15K</span>
<span class="t " style="left:620.2px;top:347.0px;font-size:6.2px;line-height:8px;color:#777;letter-spacing:0.39px;">$20K</span>
<span class="t " style="left:462.6px;top:356.5px;font-size:7.4px;line-height:10px;color:#555;letter-spacing:0.26px;">Sum of SalesAmount</span>
<span class="t " style="left:320.0px;top:300.0px;font-size:7.4px;line-height:10px;color:#555;letter-spacing:0.30px;transform-origin:0 50%;transform:rotate(-90deg);">ProductName</span>
<span class="t " style="left:314.3px;top:421.6px;font-size:6.2px;line-height:8px;color:#777;letter-spacing:-0.09px;">$50K</span>
<span class="t " style="left:317.8px;top:488.5px;font-size:6.2px;line-height:8px;color:#777;letter-spacing:-0.14px;">$0K</span>
<span class="t " style="left:327.3px;top:495.0px;font-size:6.2px;line-height:8px;color:#777;letter-spacing:-0.03px;">Jan 2024</span>
<span class="t " style="left:434.8px;top:495.0px;font-size:6.2px;line-height:8px;color:#777;letter-spacing:0.22px;">Mar 2024</span>
<span class="t " style="left:417.0px;top:503.9px;font-size:5.8px;line-height:8px;color:#555;letter-spacing:-0.08px;">Year</span>
<span class="t " style="left:528.0px;top:409.0px;font-size:7.6px;line-height:10px;color:#555;letter-spacing:-0.15px;">ProductName</span>
<span class="t " style="left:579.0px;top:409.0px;font-size:7.6px;line-height:10px;color:#555;letter-spacing:-0.15px;">Central</span>
<span class="t " style="left:613.0px;top:409.0px;font-size:7.6px;line-height:10px;color:#555;letter-spacing:-0.60px;">East</span>
<span class="t " style="left:647.3px;top:409.0px;font-size:7.6px;line-height:10px;color:#555;letter-spacing:0.08px;">North</span>
<span class="t " style="left:686.0px;top:409.0px;font-size:7.6px;line-height:10px;color:#555;letter-spacing:-0.21px;">South</span>
<span class="t " style="left:724.9px;top:409.0px;font-size:7.6px;line-height:10px;color:#555;letter-spacing:-0.27px;">West</span>
<span class="t " style="left:528.0px;top:425.5px;font-size:7.8px;line-height:10px;color:#444;letter-spacing:-0.16px;">Headphones</span>
<span class="t " style="left:581.3px;top:425.0px;font-size:9.2px;line-height:12px;color:#444;letter-spacing:-0.42px;">$1,749</span>
<span class="t " style="left:615.8px;top:425.0px;font-size:9.2px;line-height:12px;color:#444;letter-spacing:-0.30px;">$1,116</span>
<span class="t " style="left:654.1px;top:425.0px;font-size:9.2px;line-height:12px;color:#444;letter-spacing:-0.42px;">$3,947</span>
<span class="t " style="left:693.9px;top:425.0px;font-size:9.2px;line-height:12px;color:#444;letter-spacing:-0.42px;">$2,289</span>
<span class="t " style="left:729.8px;top:425.0px;font-size:9.2px;line-height:12px;color:#444;letter-spacing:-0.38px;clip-path:inset(0 3.4px 0 0);">$1,63</span>
<span class="t " style="left:528.0px;top:438.3px;font-size:7.8px;line-height:10px;color:#444;letter-spacing:-0.18px;">Laptop</span>
<span class="t " style="left:581.3px;top:437.8px;font-size:9.2px;line-height:12px;color:#444;letter-spacing:-0.42px;">$3,387</span>
<span class="t " style="left:615.8px;top:437.8px;font-size:9.2px;line-height:12px;color:#444;letter-spacing:-0.42px;">$4,732</span>
<span class="t " style="left:654.1px;top:437.8px;font-size:9.2px;line-height:12px;color:#444;letter-spacing:-0.42px;">$1,164</span>
<span class="t " style="left:693.9px;top:437.8px;font-size:9.2px;line-height:12px;color:#444;letter-spacing:-0.42px;">$1,366</span>
<span class="t " style="left:729.8px;top:437.8px;font-size:9.2px;line-height:12px;color:#444;letter-spacing:-0.38px;clip-path:inset(0 3.4px 0 0);">$3,53</span>
<span class="t " style="left:528.0px;top:451.5px;font-size:7.8px;line-height:10px;color:#444;letter-spacing:0.03px;">Monitor</span>
<span class="t " style="left:581.3px;top:451.0px;font-size:9.2px;line-height:12px;color:#444;letter-spacing:-0.42px;">$1,304</span>
<span class="t " style="left:615.8px;top:451.0px;font-size:9.2px;line-height:12px;color:#444;letter-spacing:-0.42px;">$2,537</span>
<span class="t " style="left:654.1px;top:451.0px;font-size:9.2px;line-height:12px;color:#444;letter-spacing:-0.42px;">$2,764</span>
<span class="t " style="left:693.9px;top:451.0px;font-size:9.2px;line-height:12px;color:#444;letter-spacing:-0.42px;">$1,603</span>
<span class="t " style="left:729.8px;top:451.0px;font-size:9.2px;line-height:12px;color:#444;letter-spacing:-0.38px;clip-path:inset(0 3.4px 0 0);">$3,16</span>
<span class="t " style="left:528.0px;top:463.8px;font-size:7.8px;line-height:10px;color:#444;letter-spacing:-0.19px;">Smartphone</span>
<span class="t " style="left:581.3px;top:463.3px;font-size:9.2px;line-height:12px;color:#444;letter-spacing:-0.42px;">$2,081</span>
<span class="t " style="left:622.0px;top:463.3px;font-size:9.2px;line-height:12px;color:#444;letter-spacing:-0.26px;">$923</span>
<span class="t " style="left:654.1px;top:463.3px;font-size:9.2px;line-height:12px;color:#444;letter-spacing:-0.42px;">$2,301</span>
<span class="t " style="left:693.9px;top:463.3px;font-size:9.2px;line-height:12px;color:#444;letter-spacing:-0.42px;">$1,932</span>
<span class="t " style="left:729.8px;top:463.3px;font-size:9.2px;line-height:12px;color:#444;letter-spacing:-0.38px;clip-path:inset(0 3.4px 0 0);">$1,22</span>
<span class="t " style="left:528.0px;top:476.6px;font-size:7.8px;line-height:10px;color:#444;letter-spacing:-0.27px;">Tablet</span>
<span class="t " style="left:587.5px;top:476.1px;font-size:9.2px;line-height:12px;color:#444;letter-spacing:-0.26px;">$616</span>
<span class="t " style="left:622.0px;top:476.1px;font-size:9.2px;line-height:12px;color:#444;letter-spacing:-0.26px;">$625</span>
<span class="t " style="left:654.1px;top:476.1px;font-size:9.2px;line-height:12px;color:#444;letter-spacing:-0.42px;">$1,847</span>
<span class="t " style="left:693.9px;top:476.1px;font-size:9.2px;line-height:12px;color:#444;letter-spacing:-0.42px;">$3,148</span>
<span class="t " style="left:528.0px;top:489.4px;font-size:7.8px;line-height:10px;color:#111;letter-spacing:-0.21px;font-weight:700;">Total</span>
<span class="t " style="left:579.5px;top:488.8px;font-size:9.2px;line-height:12px;color:#111;letter-spacing:-0.12px;font-weight:700;">$9,137</span>
<span class="t " style="left:614.0px;top:488.8px;font-size:9.2px;line-height:12px;color:#111;letter-spacing:-0.12px;font-weight:700;">$9,933</span>
<span class="t " style="left:647.1px;top:488.8px;font-size:9.2px;line-height:12px;color:#111;letter-spacing:-0.09px;font-weight:700;">$12,023</span>
<span class="t " style="left:686.9px;top:488.8px;font-size:9.2px;line-height:12px;color:#111;letter-spacing:-0.09px;font-weight:700;">$10,338</span>
<span class="t " style="left:727.6px;top:488.8px;font-size:9.2px;line-height:12px;color:#111;letter-spacing:0.06px;font-weight:700;clip-path:inset(0 3.4px 0 0);">$9,55</span>
<span class="t " style="left:168.9px;top:530.2px;font-size:10.8px;line-height:14px;color:#4a4947;letter-spacing:-0.69px;">Page 1</span>
<span class="t " style="left:236.0px;top:530.2px;font-size:10.8px;line-height:14px;color:#252423;letter-spacing:-0.54px;font-weight:700;">Page 2</span>
<span class="t " style="left:304.3px;top:530.2px;font-size:10.8px;line-height:14px;color:#4a4947;letter-spacing:-0.61px;">Page 3</span>
<span class="t " style="left:371.4px;top:530.2px;font-size:10.8px;line-height:14px;color:#4a4947;letter-spacing:-0.52px;">Page 4</span>
<span class="t " style="left:5.3px;top:556.9px;font-size:10.2px;line-height:13px;color:#605e5c;letter-spacing:0.01px;">Page 2 of 4</span>
<span class="t " style="left:1065.3px;top:556.3px;font-size:10px;line-height:13px;color:#605e5c;letter-spacing:-0.11px;">63%</span>
<span class="t " style="left:768.9px;top:159.9px;font-size:13.2px;line-height:17px;color:#252423;letter-spacing:-0.21px;font-weight:700;transform-origin:0 50%;transform:rotate(90deg);">Filters</span>
<span class="t " style="left:1115.0px;top:141.4px;font-size:13.2px;line-height:17px;color:#252423;letter-spacing:0.10px;font-weight:700;transform-origin:0 50%;transform:rotate(90deg);">Data</span>
<span class="t " style="left:790.8px;top:123.1px;font-size:13.6px;line-height:18px;color:#2b2a29;letter-spacing:-0.38px;font-weight:700;">Bookmarks</span>
<span class="t " style="left:808.2px;top:154.5px;font-size:10.5px;line-height:14px;color:#4a4947;letter-spacing:0.04px;">Add</span>
<span class="t " style="left:858.9px;top:154.5px;font-size:10.5px;line-height:14px;color:#4a4947;letter-spacing:-0.02px;">View</span>
<span class="t " style="left:792.8px;top:181.2px;font-size:10.5px;line-height:14px;color:#4a4947;letter-spacing:-0.09px;">Bookmark 1</span>
<span class="t u" style="left:792.3px;top:514.0px;font-size:10.6px;line-height:14px;color:#2f8672;letter-spacing:-0.02px;">Learn how to create and edit</span>
<span class="t u" style="left:792.3px;top:527.8px;font-size:10.6px;line-height:14px;color:#2f8672;letter-spacing:-0.01px;">bookmarks</span>
<span class="t " style="left:950.4px;top:122.6px;font-size:13.6px;line-height:18px;color:#252423;letter-spacing:-0.00px;font-weight:700;">Format button</span>
<span class="t " style="left:974.8px;top:170.7px;font-size:11.6px;line-height:15px;color:#605e5c;letter-spacing:-0.09px;">Search</span>
<span class="t " style="left:953.5px;top:204.5px;font-size:11.6px;line-height:15px;color:#252423;letter-spacing:0.09px;font-weight:700;">Button</span>
<span class="t " style="left:1005.7px;top:204.5px;font-size:11.6px;line-height:15px;color:#4a4947;letter-spacing:0.05px;">General</span>
<span class="t " style="left:971.4px;top:258.8px;font-size:10.4px;line-height:14px;color:#252423;letter-spacing:-0.30px;font-weight:700;">Action</span>
<span class="t " style="left:957.3px;top:284.0px;font-size:10.4px;line-height:14px;color:#4a4947;letter-spacing:-0.26px;">Type</span>
<span class="t " style="left:964.7px;top:304.6px;font-size:10.4px;line-height:14px;color:#6b6967;letter-spacing:0.01px;">Bookmark</span>
<span class="t " style="left:957.3px;top:329.6px;font-size:10.4px;line-height:14px;color:#4a4947;letter-spacing:-0.06px;">Bookmark</span>
<span class="t " style="left:964.7px;top:350.8px;font-size:10.4px;line-height:14px;color:#6b6967;letter-spacing:-0.08px;">Bookmark 1</span>
<span class="t " style="left:957.3px;top:375.6px;font-size:10.4px;line-height:14px;color:#b5b3b1;letter-spacing:0.06px;">Destination</span>
<span class="t " style="left:964.7px;top:396.6px;font-size:10.4px;line-height:14px;color:#b5b3b1;letter-spacing:0.19px;">None</span>
<span class="t " style="left:957.3px;top:421.2px;font-size:10.4px;line-height:14px;color:#b5b3b1;letter-spacing:-0.39px;">Web URL</span>
<span class="t " style="left:1071.0px;top:438.4px;font-size:15px;line-height:20px;color:#b8b6b4;letter-spacing:0.89px;font-style:italic;font-family:'Liberation Serif',serif;">fx</span>
<span class="t " style="left:971.2px;top:484.8px;font-size:10.8px;line-height:14px;color:#252423;letter-spacing:-0.40px;font-weight:700;">Tooltip</span>
<span class="t " style="left:1063.3px;top:486.8px;font-size:7.6px;line-height:10px;color:#fff;letter-spacing:0.13px;">On</span>
<span class="t " style="left:967.5px;top:520.0px;font-size:10.6px;line-height:14px;color:#4a4947;letter-spacing:-0.07px;">Reset to default</span>
<span class="t " style="left:622.8px;top:151.5px;font-size:18px;line-height:23px;color:#fff;letter-spacing:-1.22px;">1</span>
<span class="t " style="left:1063.2px;top:262.7px;font-size:18px;line-height:23px;color:#fff;letter-spacing:-1.02px;">2</span>
<span class="t " style="left:1069.6px;top:396.3px;font-size:18px;line-height:23px;color:#fff;letter-spacing:-1.02px;">3</span>
</div>
</body></html>
